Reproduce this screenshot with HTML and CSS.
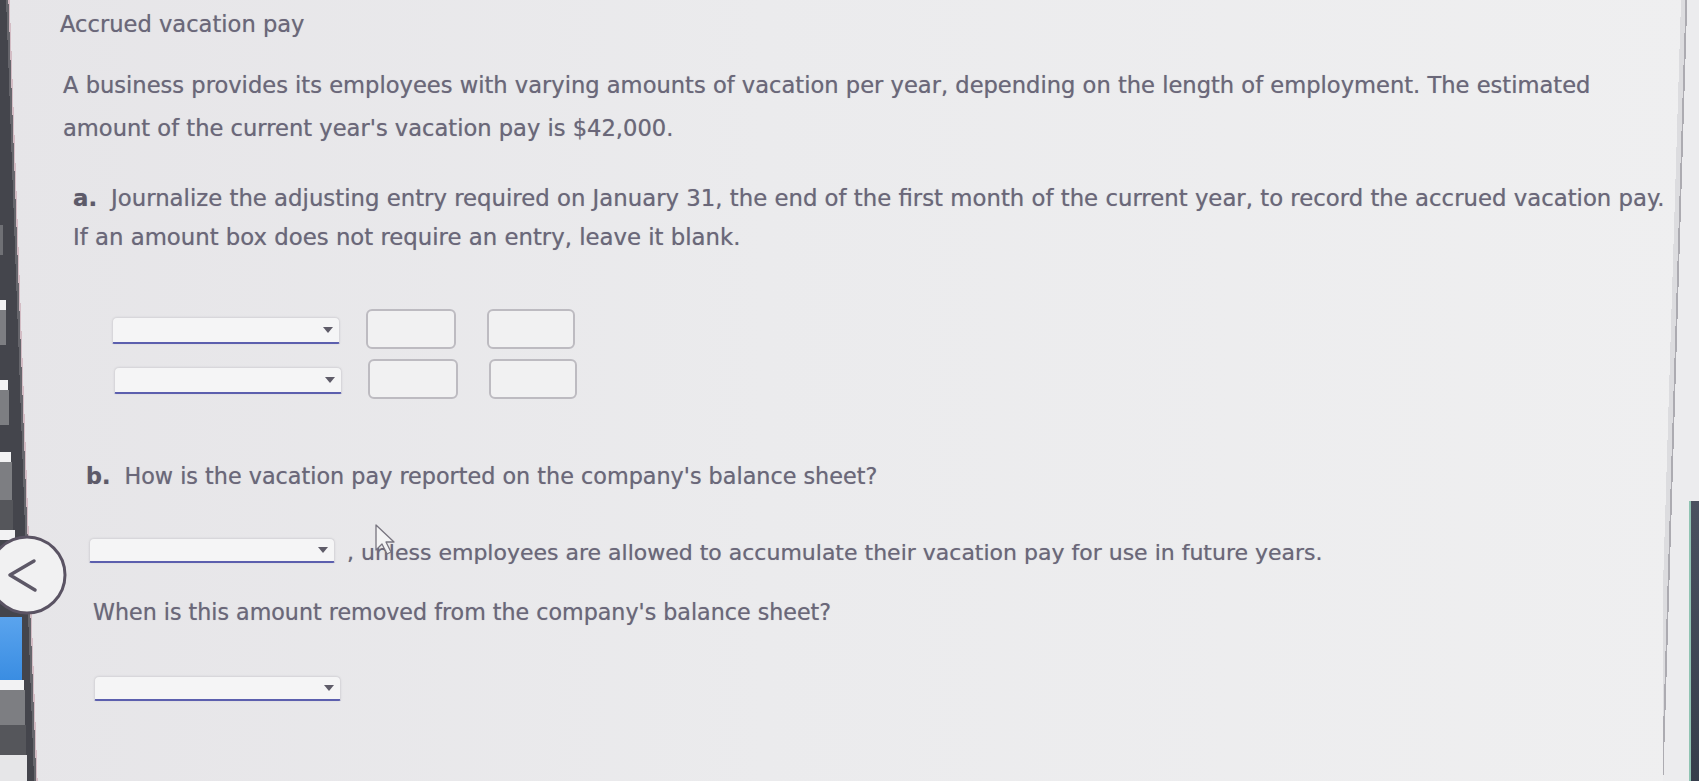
FILE: index.html
```html
<!DOCTYPE html>
<html lang="en">
<head>
<meta charset="utf-8">
<title>Accrued vacation pay</title>
<link rel="stylesheet" href="styles.css">
</head>
<body>
<div class="screen">
  <aside class="rail">
    <div class="gap gap-top"></div>
    <div class="tile tile-hint"></div>
    <div class="gap gap-45"></div>
    <div class="tile tile-white w6"></div>
    <div class="tile tile-gray w6"></div>
    <div class="gap gap-35"></div>
    <div class="tile tile-white w8"></div>
    <div class="tile tile-gray w9"></div>
    <div class="gap gap-27"></div>
    <div class="tile tile-white w11"></div>
    <div class="tile tile-gray tall w12"></div>
    <div class="tile tile-dark w13"></div>
    <div class="tile tile-white w15"></div>
    <div class="gap gap-77"></div>
    <div class="tile tile-blue w22"></div>
    <div class="tile tile-white w24"></div>
    <div class="tile tile-gray w25"></div>
    <div class="tile tile-dark w26"></div>
    <div class="tile tile-white last w27"></div>
  </aside>

  <main class="page">
    <h1 class="title">Accrued vacation pay</h1>
    <p class="intro">A business provides its employees with varying amounts of vacation per year, depending on the length of employment. The estimated amount of the current year's vacation pay is $42,000.</p>

    <p class="q q-a">
      <span class="line"><b class="label">a.</b><span class="qtext">Journalize the adjusting entry required on January 31, the end of the first month of the current year, to record the accrued vacation pay.</span></span>
      <span class="line">If an amount box does not require an entry, leave it blank.</span>
    </p>

    <div class="journal">
      <div class="jrow">
        <span class="select"></span>
        <span class="amt"></span>
        <span class="amt"></span>
      </div>
      <div class="jrow jrow-2">
        <span class="select"></span>
        <span class="amt"></span>
        <span class="amt"></span>
      </div>
    </div>

    <p class="q q-b"><b class="label">b.</b><span class="qtext">How is the vacation pay reported on the company's balance sheet?</span></p>

    <div class="answer-row">
      <span class="select select-b"></span>
      <span class="after">, unless employees are allowed to accumulate their vacation pay for use in future years.</span>
      <svg class="pointer" width="26" height="34" viewBox="0 0 26 34" aria-hidden="true">
        <path d="M2 2 L2 27 L8 21 L13 31 L17 29 L12 19 L20 19 Z" fill="#f4f4f6" fill-opacity="0.85" stroke="#77747f" stroke-width="1.3" stroke-linejoin="round"/>
      </svg>
    </div>

    <p class="q q-when">When is this amount removed from the company's balance sheet?</p>

    <div class="answer-row answer-last">
      <span class="select select-last"></span>
    </div>
  </main>

  <div class="edge">
    <div class="edge-dark"></div>
  </div>

  <svg class="back" width="80" height="80" viewBox="0 0 80 80" aria-hidden="true">
    <circle cx="40" cy="40" r="38" fill="#f1f1f2" stroke="#5a5363" stroke-width="3"/>
    <polyline points="47,26 23,40 48,55" fill="none" stroke="#5d5867" stroke-width="3.5" stroke-linecap="round" stroke-linejoin="round"/>
  </svg>
</div>
</body>
</html>
```

FILE: styles.css
```css
* { box-sizing: border-box; }

html, body {
  margin: 0;
  height: 100%;
}

body {
  background: linear-gradient(90deg, #e6e5e8 0%, #ebebed 45%, #efeff0 100%);
  font-family: "DejaVu Sans", Verdana, sans-serif;
  color: #6a6779;
  overflow: hidden;
}

.screen {
  position: relative;
  display: flex;
  width: 1699px;
  height: 781px;
}

/* ---------- left rail (dark slanted bezel with thumbnails) ---------- */
.rail {
  flex: 0 0 38px;
  display: flex;
  flex-direction: column;
  background: linear-gradient(87.95deg, #2f3036 0 4px, #44454c 4px 34px, #66666c 34px 36.3px, #d3bcc4 36.3px 37.6px, transparent 37.6px);
}

.gap { flex: none; }
.gap-top { height: 225px; }
.gap-45 { height: 45px; }
.gap-35 { height: 35px; }
.gap-27 { height: 27px; }
.gap-77 { height: 77px; }

.tile { flex: none; height: 35px; }
.tile-hint { height: 30px; width: 3px; background: #6f7075; }
.tile-white { height: 10px; background: #f2f2f3; }
.tile-gray { background: #7d7e82; }
.tile-gray.tall { height: 38px; }
.tile-dark { height: 30px; background: #55565b; }
.tile-blue { height: 63px; background: linear-gradient(180deg, #5aa4ee 0%, #3a8de2 100%); }
.tile-white.last { height: 26px; background: #e6e6e8; }

.w6 { width: 6px; }
.w8 { width: 8px; }
.w9 { width: 9px; }
.w11 { width: 11px; }
.w12 { width: 12px; }
.w13 { width: 13px; }
.w15 { width: 15px; }
.w22 { width: 22px; }
.w24 { width: 24px; }
.w25 { width: 25px; }
.w26 { width: 26px; }
.w27 { width: 27px; }

/* ---------- main page ---------- */
.page {
  flex: 1;
  min-width: 0;
  padding-top: 4px;
  font-size: 22px;
  line-height: 40px;
  text-shadow: 0 0 0.7px rgba(98, 95, 115, 0.55);
}

.title {
  margin: 0 0 0 22px;
  font-size: 22.6px;
  font-weight: normal;
  line-height: 40px;
}

.intro {
  margin: 20px -16px 0 25px;
  font-size: 22.6px;
  line-height: 43px;
}

.q { margin: 0; }

.line {
  display: block;
  white-space: nowrap;
}

.label {
  color: #5d5a69;
  font-weight: bold;
  margin-right: 14px;
}

.q-a {
  margin: 29px -16px 0 35px;
  font-size: 22.8px;
  line-height: 39px;
}

/* journal entry grid */
.journal {
  margin: 52px 0 0 74px;
  display: flex;
  flex-direction: column;
  gap: 10px;
}

.jrow {
  display: flex;
  align-items: center;
  height: 40px;
}

.jrow-2 { margin-left: 2px; }

.select {
  position: relative;
  display: block;
  flex: none;
  width: 228px;
  height: 27px;
  background: #f5f5f6;
  border: 1px solid #d8d7db;
  border-bottom: 2px solid #5c5fae;
  border-radius: 5px 5px 2px 2px;
  box-shadow: 0 0 2px rgba(90, 90, 100, 0.12);
}

.select::after {
  content: "";
  position: absolute;
  right: 6px;
  top: 50%;
  margin-top: -3px;
  border-left: 5px solid transparent;
  border-right: 5px solid transparent;
  border-top: 6px solid #5f5c69;
}

.jrow .select { margin-right: 26px; margin-top: 3px; }

.amt {
  flex: none;
  width: 90px;
  height: 40px;
  background: #f1f1f2;
  border: 2px solid #bdbbc1;
  border-radius: 6px;
}

.amt + .amt { margin-left: 31px; width: 88px; }

/* part b */
.q-b {
  margin: 57px 0 0 48px;
  font-size: 22.3px;
}

.answer-row {
  position: relative;
  display: flex;
  align-items: center;
  height: 40px;
  margin: 34px 0 0 51px;
}

.select-b { width: 246px; height: 25px; }

.after {
  margin-left: 12px;
  padding-top: 6px;
  white-space: nowrap;
}

.pointer {
  position: absolute;
  left: 285px;
  top: -7px;
}

.q-when {
  margin: 22px 0 0 55px;
  font-size: 22.2px;
}

.answer-last {
  margin: 36px 0 0 56px;
}

.select-last { width: 247px; height: 25px; }

/* ---------- right bezel ---------- */
.edge {
  flex: 0 0 36px;
  display: flex;
  flex-direction: column;
  justify-content: flex-end;
  background: linear-gradient(91.76deg, transparent 0 18px, #dcdcdf 18px 22.5px, #acabb1 22.5px 24.3px, #ececee 24.3px);
}

.edge-dark {
  align-self: flex-end;
  width: 10px;
  height: 280px;
  background: linear-gradient(180deg, #4a5160 0%, #363d4b 100%);
  border-left: 2px solid #8fc3b2;
}

/* ---------- back button overlay ---------- */
.back {
  position: absolute;
  left: -13px;
  top: 535px;
}
```
